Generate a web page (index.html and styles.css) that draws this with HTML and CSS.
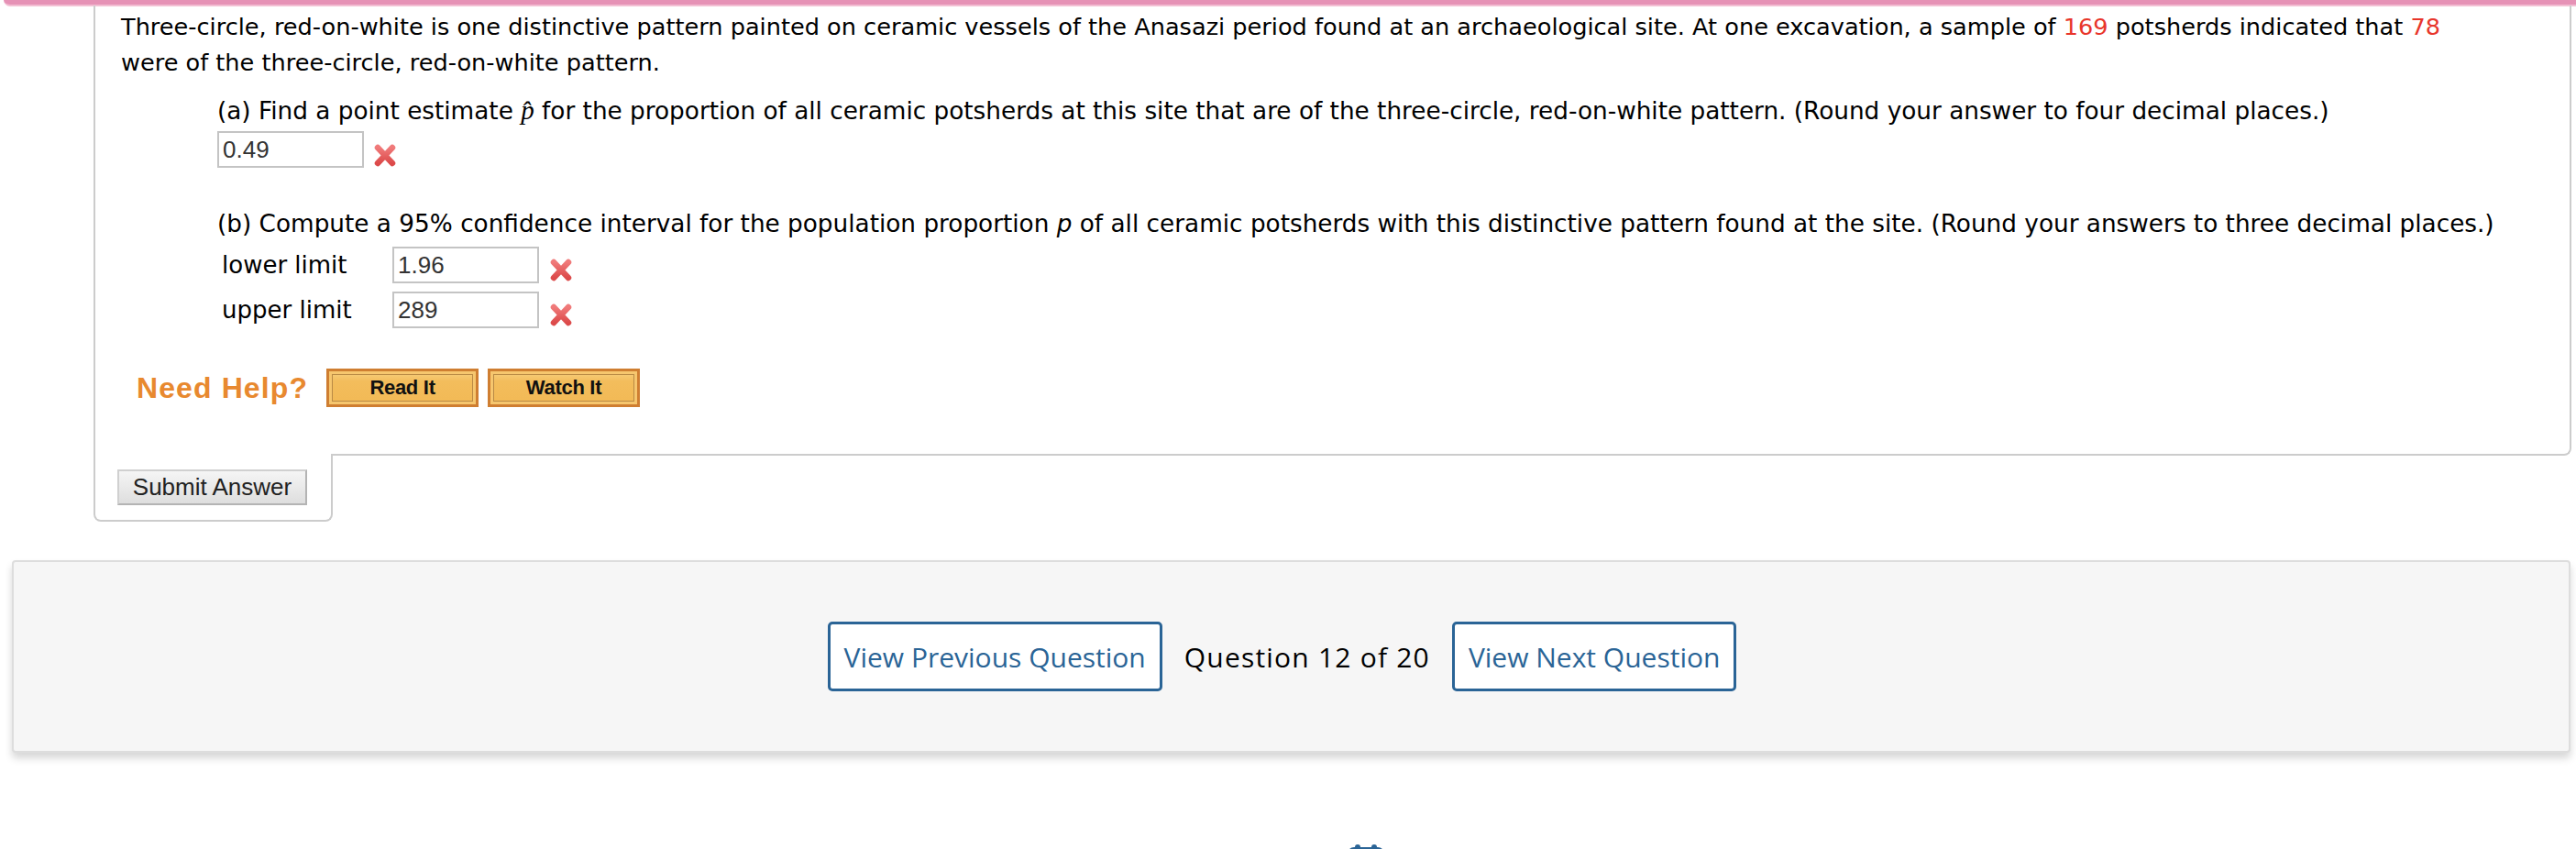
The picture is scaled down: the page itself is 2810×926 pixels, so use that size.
FILE: index.html
```html
<!DOCTYPE html>
<html>
<head>
<meta charset="utf-8">
<title>Question 12</title>
<link rel="stylesheet" href="styles.css">
</head>
<body>
<div class="prev-box"></div>
<div class="question">
  <p class="stem">Three-circle, red-on-white is one distinctive pattern painted on ceramic vessels of the Anasazi period found at an archaeological site. At one excavation, a sample of <span class="num">169</span> potsherds indicated that <span class="num">78</span><br>were of the three-circle, red-on-white pattern.</p>
  <div class="part part-a">
    <p class="prompt">(a) Find a point estimate <span class="phat">p&#770;</span> for the proportion of all ceramic potsherds at this site that are of the three-circle, red-on-white pattern. (Round your answer to four decimal places.)</p>
    <div class="answer">
      <input class="ans" type="text" value="0.49">
      <svg class="wrong" viewBox="0 0 26 27"><defs><linearGradient id="xg" x1="0" y1="0" x2="0" y2="1"><stop offset="0" stop-color="#f07a7a"/><stop offset="1" stop-color="#dc4a4a"/></linearGradient></defs><path d="M5 5 L21 22 M21 5 L5 22" stroke="url(#xg)" stroke-width="6.5" stroke-linecap="round"/></svg>
    </div>
  </div>
  <div class="part part-b">
    <p class="prompt">(b) Compute a 95% confidence interval for the population proportion <i class="pvar">p</i> of all ceramic potsherds with this distinctive pattern found at the site. (Round your answers to three decimal places.)</p>
    <div class="limits">
      <span class="lbl">lower limit</span>
      <input class="ans" type="text" value="1.96">
      <svg class="wrong" viewBox="0 0 26 27"><path d="M5 5 L21 22 M21 5 L5 22" stroke="url(#xg)" stroke-width="6.5" stroke-linecap="round"/></svg>
      <span class="lbl">upper limit</span>
      <input class="ans" type="text" value="289">
      <svg class="wrong" viewBox="0 0 26 27"><path d="M5 5 L21 22 M21 5 L5 22" stroke="url(#xg)" stroke-width="6.5" stroke-linecap="round"/></svg>
    </div>
  </div>
  <div class="help">
    <span class="need">Need Help?</span>
    <button class="help-btn">Read It</button>
    <button class="help-btn">Watch It</button>
  </div>
</div>
<div class="submit-tab"><button class="submit">Submit Answer</button></div>
<nav class="qnav">
  <button class="nav-btn">View Previous Question</button>
  <span class="qcount">Question 12 of 20</span>
  <button class="nav-btn">View Next Question</button>
</nav>
<div class="footer-icon">
  <svg viewBox="0 0 40 40" width="40" height="40"><rect x="8" y="0" width="6" height="8" rx="3" fill="#2a6496"/><rect x="26" y="0" width="6" height="8" rx="3" fill="#2a6496"/><rect x="0" y="3" width="40" height="37" rx="7" fill="#2a6496"/></svg>
</div>
</body>
</html>
```

FILE: styles.css
```css
html, body {
  margin: 0;
  padding: 0;
  background: #fff;
}
body {
  font-family: "DejaVu Sans", Verdana, sans-serif;
  font-size: 26px;
  color: #000;
  overflow: hidden;
}
.prev-box {
  height: 5px;
  margin-left: 4px;
  background: #e692b6;
  border-bottom: 2px solid #f3bfd3;
  border-radius: 0 0 0 10px;
}
.question {
  margin: -1px 5px 0 102px;
  border: 2px solid #cccccc;
  border-top: 0;
  border-radius: 0 0 8px 0;
  padding: 4px 28px 51px 28px;
}
.stem, .prompt {
  margin: 0;
  line-height: 39px;
  white-space: nowrap;
}
.stem {
  font-size: 25.6px;
}
.prompt {
  font-size: 26.3px;
}
.num {
  color: #e8352b;
}
.part {
  margin-left: 105px;
}
.part-a {
  margin-top: 13px;
}
.part-b {
  margin-top: 42px;
}
.phat {
  font-family: "Liberation Serif", "Times New Roman", serif;
  font-style: italic;
  font-size: 29px;
}
.pvar {
  font-style: italic;
}
.answer {
  display: flex;
  align-items: flex-end;
  gap: 10px;
  margin-top: 2px;
}
.ans {
  box-sizing: border-box;
  width: 160px;
  height: 40px;
  margin: 0;
  border: 2px solid #c4c4c4;
  padding: 0 4px;
  font-family: "Liberation Sans", Arial, sans-serif;
  font-size: 26px;
  color: #333;
  background: #fff;
  outline: none;
}
.wrong {
  width: 26px;
  height: 27px;
  flex: none;
}
.limits {
  display: grid;
  grid-template-columns: 175px 160px 26px;
  column-gap: 11px;
  row-gap: 9px;
  align-items: center;
  margin-top: 5px;
  padding-left: 5px;
}
.limits .wrong {
  align-self: end;
  margin-bottom: 1px;
}
.help {
  display: flex;
  align-items: center;
  margin: 44px 0 0 17px;
  height: 42px;
}
.need {
  font-family: "Liberation Sans", Arial, sans-serif;
  font-weight: bold;
  font-size: 32px;
  letter-spacing: 1.1px;
  color: #e8892f;
  margin-right: 20px;
}
.help-btn {
  box-sizing: border-box;
  width: 166px;
  height: 42px;
  margin: 0 10px 0 0;
  padding: 0;
  border: 3px solid #cf7e31;
  background: linear-gradient(#f7cf80, #f3bd5c 30%, #f2b955);
  box-shadow: inset 0 0 0 3px #f6c66e, inset 0 0 0 4px #b98a45;
  font-family: "Liberation Sans", Arial, sans-serif;
  font-weight: bold;
  font-size: 22px;
  color: #111;
  letter-spacing: -0.3px;
}
.submit-tab {
  position: relative;
  box-sizing: border-box;
  width: 261px;
  margin: -2px 0 0 102px;
  background: #fff;
  border: 2px solid #cccccc;
  border-top: 0;
  border-radius: 0 0 8px 8px;
  padding: 17px 0 16px 24px;
}
.submit {
  display: block;
  box-sizing: border-box;
  width: 207px;
  height: 39px;
  margin: 0;
  padding: 0;
  border: 2px solid #b4b4b4;
  border-top-color: #d0d0d0;
  border-left-color: #d0d0d0;
  background: linear-gradient(#f5f5f5, #dedede);
  font-family: "Liberation Sans", Arial, sans-serif;
  font-size: 26px;
  color: #222;
}
.qnav {
  box-sizing: border-box;
  height: 210px;
  margin: 42px 6px 0 13px;
  background: #f6f6f6;
  border: 2px solid #dddddd;
  border-radius: 4px;
  box-shadow: 0 6px 9px rgba(0, 0, 0, 0.16);
  display: flex;
  align-items: center;
  justify-content: center;
  gap: 24px;
  padding-right: 20px;
  font-family: "Open Sans", sans-serif;
  font-size: 30px;
}
.nav-btn {
  box-sizing: border-box;
  height: 76px;
  margin: 0;
  padding: 0 15px;
  border: 3px solid #2a6496;
  border-radius: 5px;
  background: #fff;
  font-family: "Open Sans", sans-serif;
  font-size: 30px;
  color: #2a6496;
}
.qcount {
  color: #000;
  letter-spacing: 1.2px;
}
.footer-icon {
  margin: 100px 0 0 1470px;
  height: 40px;
}
.footer-icon svg {
  display: block;
}
```
